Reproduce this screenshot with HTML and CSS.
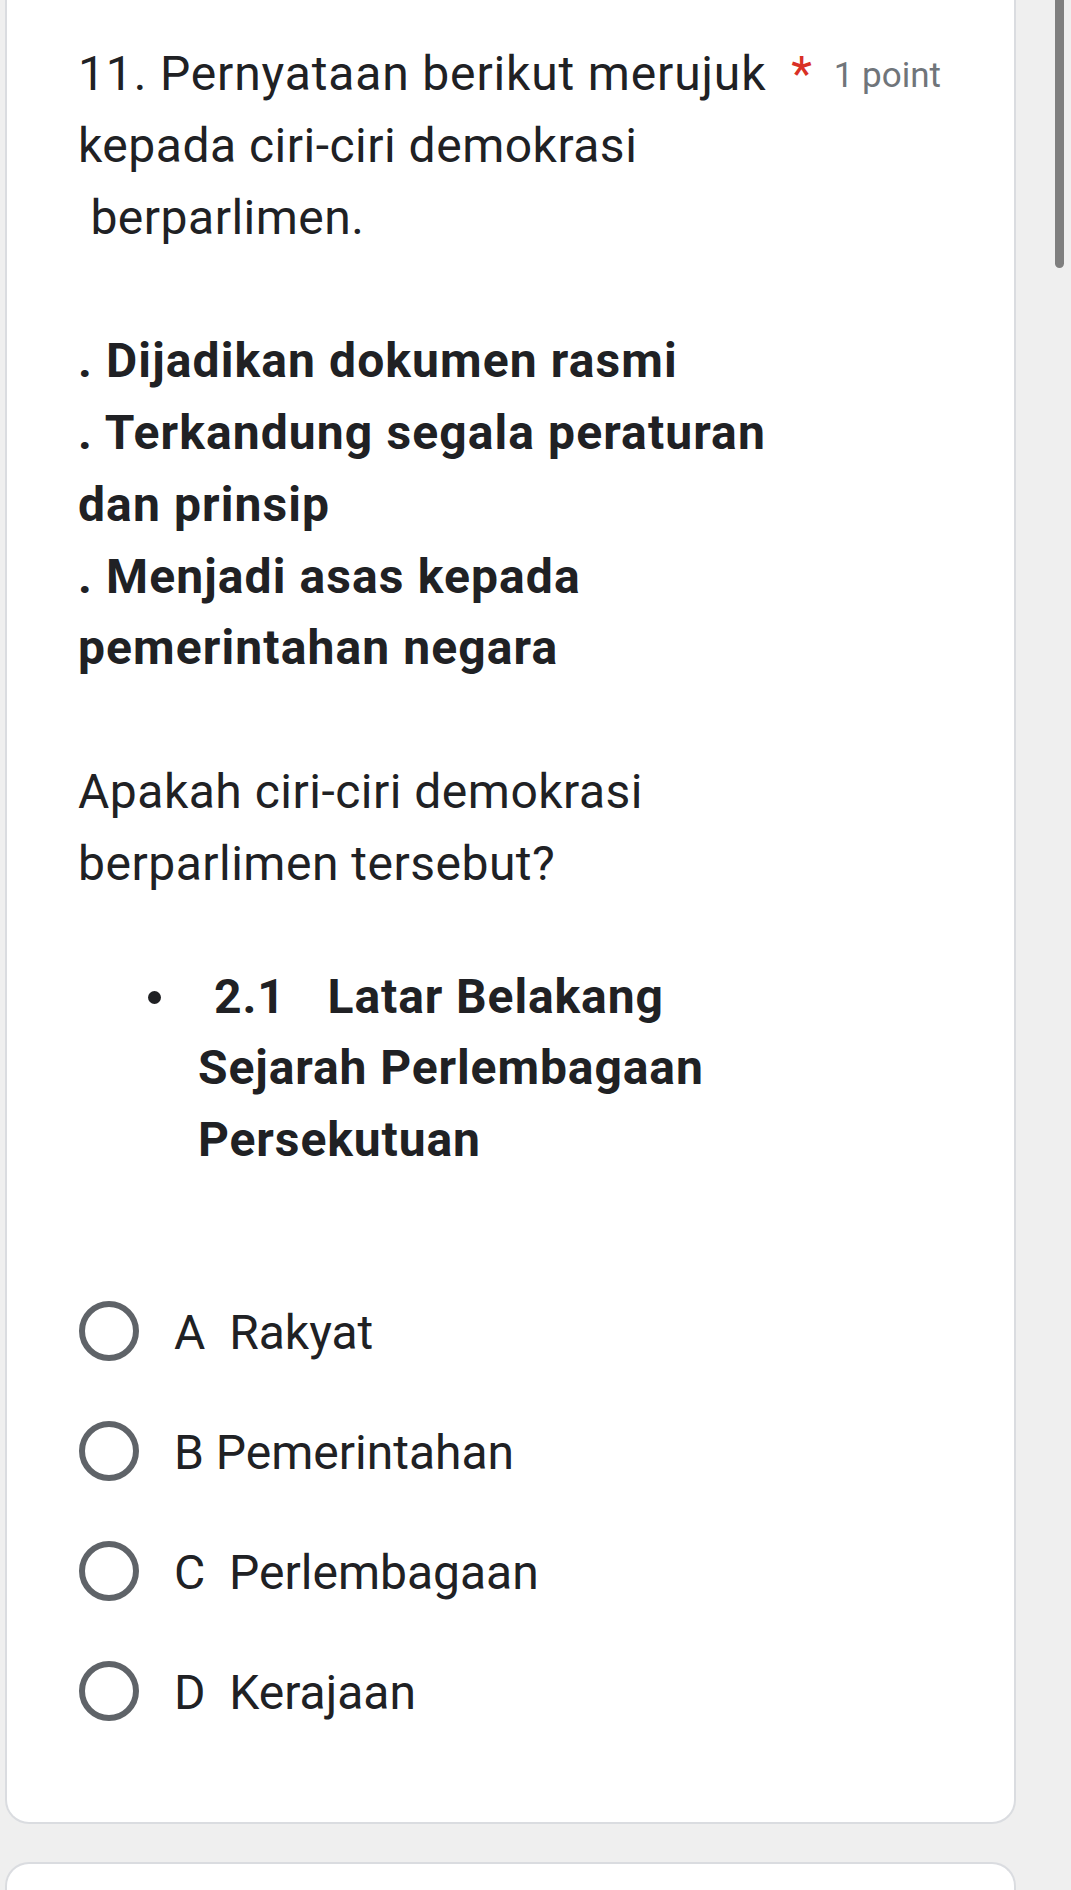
FILE: index.html
```html
<!DOCTYPE html>
<html lang="ms">
<head>
<meta charset="utf-8">
<title>Soalan 11</title>
<link rel="stylesheet" href="styles.css">
</head>
<body>
<div class="scroll-thumb"></div>
<div class="page">
  <div class="card">
    <div class="q-head">
      <div class="q-title"><span class="q-title-text">11. Pernyataan berikut merujuk</span><span class="req">*</span></div>
      <div class="pts">1 point</div>
    </div>
    <div class="q-body">
      <div class="line">kepada ciri-ciri demokrasi</div>
      <div class="line">&nbsp;berparlimen.</div>
      <div class="line blank">&nbsp;</div>
      <div class="line strong">. Dijadikan dokumen rasmi</div>
      <div class="line strong">. Terkandung segala peraturan</div>
      <div class="line strong">dan prinsip</div>
      <div class="line strong">. Menjadi asas kepada</div>
      <div class="line strong">pemerintahan negara</div>
      <div class="line blank">&nbsp;</div>
      <div class="line">Apakah ciri-ciri demokrasi</div>
      <div class="line">berparlimen tersebut?</div>
    </div>
    <ul class="list">
      <li class="list-item">
        <span class="dot"></span>
        <span class="list-text"><span class="num">2.1</span> Latar Belakang<br>Sejarah Perlembagaan<br>Persekutuan</span>
      </li>
    </ul>
    <div class="options">
      <div class="opt"><span class="radio"></span><span class="opt-label">A  Rakyat</span></div>
      <div class="opt"><span class="radio"></span><span class="opt-label">B Pemerintahan</span></div>
      <div class="opt"><span class="radio"></span><span class="opt-label">C  Perlembagaan</span></div>
      <div class="opt"><span class="radio"></span><span class="opt-label">D  Kerajaan</span></div>
    </div>
  </div>
  <div class="card-next"></div>
</div>
</body>
</html>
```
FILE: styles.css
```css
html {
  overflow: hidden;
}

body {
  margin: 0;
  background: #efefef;
  font-family: Roboto, "Noto Sans", "Liberation Sans", sans-serif;
  color: #202124;
}

.page {
  padding: 0 55px 0 5px;
}

.card {
  background: #ffffff;
  border: 2px solid #dadce0;
  border-top: none;
  border-radius: 0 0 24px 24px;
  padding: 38px 73px 71px 71px;
}

.q-head {
  display: flex;
  justify-content: space-between;
  align-items: flex-start;
}

.q-title {
  font-size: 48px;
  line-height: 71.8px;
}

.q-title-text {
  letter-spacing: 0.85px;
}

.req {
  color: #d93025;
  margin-left: 25px;
}

.pts {
  font-size: 35px;
  line-height: 35px;
  color: #70757a;
  margin-top: 20px;
  white-space: nowrap;
}

.q-body {
  font-size: 48px;
  line-height: 71.8px;
  letter-spacing: 0.5px;
}

.line {
  white-space: nowrap;
}

.strong {
  font-weight: 700;
  letter-spacing: 1.1px;
}

.list {
  list-style: none;
  margin: 61px 0 0;
  padding: 0;
  font-size: 48px;
  line-height: 71.8px;
  font-weight: 700;
  letter-spacing: 0.9px;
}

.list-item {
  display: flex;
  align-items: flex-start;
}

.dot {
  flex: none;
  width: 13px;
  height: 13px;
  border-radius: 50%;
  background: #202124;
  margin: 30px 37px 0 70px;
}

.list-text {
  white-space: nowrap;
}

.num {
  padding-left: 16px;
  padding-right: 29px;
}

.options {
  margin-top: 95px;
}

.opt {
  display: flex;
  align-items: center;
  height: 120px;
}

.radio {
  flex: none;
  width: 60px;
  height: 60px;
  box-sizing: border-box;
  border: 6px solid #5f6368;
  border-radius: 50%;
  margin-left: 1px;
}

.opt-label {
  font-size: 48px;
  line-height: 56px;
  margin-left: 35px;
  padding-top: 5px;
  white-space: pre;
}

.card-next {
  margin-top: 38px;
  height: 80px;
  background: #ffffff;
  border: 2px solid #dadce0;
  border-bottom: none;
  border-radius: 24px 24px 0 0;
}

.scroll-thumb {
  position: fixed;
  top: -10px;
  left: 1055px;
  width: 9px;
  height: 278px;
  border-radius: 5px;
  background: #7f7f7f;
}
```
